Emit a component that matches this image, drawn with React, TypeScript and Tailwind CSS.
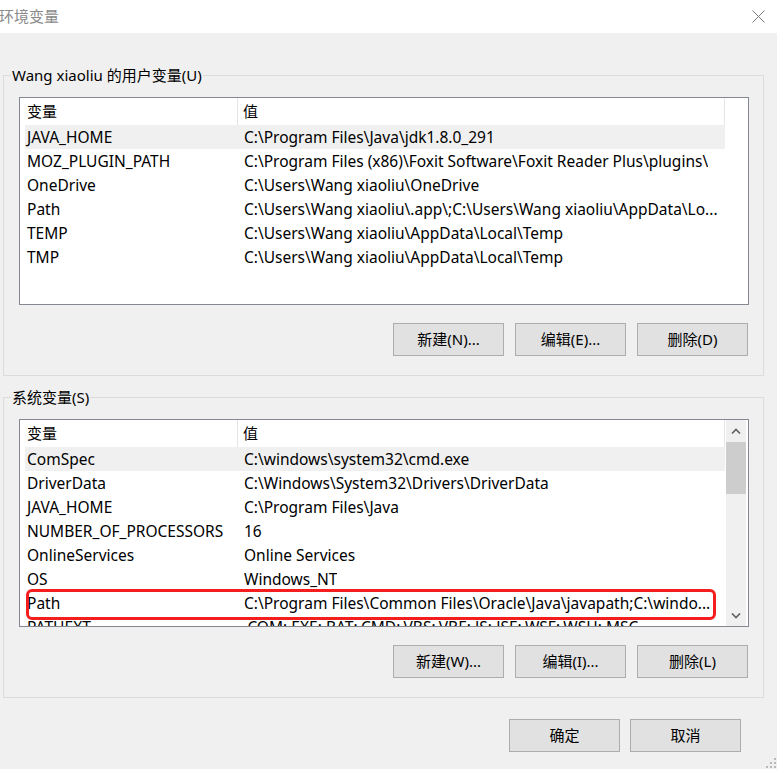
import React from "react";

type Row = { name: string; value: string };

const userVars: Row[] = [
  { name: "JAVA_HOME", value: "C:\\Program Files\\Java\\jdk1.8.0_291" },
  { name: "MOZ_PLUGIN_PATH", value: "C:\\Program Files (x86)\\Foxit Software\\Foxit Reader Plus\\plugins\\" },
  { name: "OneDrive", value: "C:\\Users\\Wang xiaoliu\\OneDrive" },
  { name: "Path", value: "C:\\Users\\Wang xiaoliu\\.app\\;C:\\Users\\Wang xiaoliu\\AppData\\Lo..." },
  { name: "TEMP", value: "C:\\Users\\Wang xiaoliu\\AppData\\Local\\Temp" },
  { name: "TMP", value: "C:\\Users\\Wang xiaoliu\\AppData\\Local\\Temp" },
];

const sysVars: Row[] = [
  { name: "ComSpec", value: "C:\\windows\\system32\\cmd.exe" },
  { name: "DriverData", value: "C:\\Windows\\System32\\Drivers\\DriverData" },
  { name: "JAVA_HOME", value: "C:\\Program Files\\Java" },
  { name: "NUMBER_OF_PROCESSORS", value: "16" },
  { name: "OnlineServices", value: "Online Services" },
  { name: "OS", value: "Windows_NT" },
  { name: "Path", value: "C:\\Program Files\\Common Files\\Oracle\\Java\\javapath;C:\\windo..." },
  { name: "PATHEXT", value: ".COM;.EXE;.BAT;.CMD;.VBS;.VBE;.JS;.JSE;.WSF;.WSH;.MSC" },
];

function Chevron({ up }: { up?: boolean }) {
  return (
    <svg width="10" height="6" viewBox="0 0 10 6" className="block">
      <path
        d={up ? "M1 5.5 L5 1.5 L9 5.5" : "M1 0.5 L5 4.5 L9 0.5"}
        fill="none"
        stroke="#606060"
        strokeWidth="1.6"
      />
    </svg>
  );
}

function VarList({ rows, scroll, marked }: { rows: Row[]; scroll?: boolean; marked?: string }) {
  return (
    <div className="mt-[12px] flex h-[208px] w-[730px] overflow-hidden border border-[#828790] bg-white pl-[5px] text-[15.5px]">
      <div className="w-[700px]">
        <div className="flex h-[27px] items-center text-[15px]">
          <div className="flex h-full w-[213px] items-center border-r border-[#e5e5e5] pl-[2px]">变量</div>
          <div className="flex h-full flex-1 items-center border-r border-[#e5e5e5] pl-[5px]">值</div>
        </div>
        {rows.map((r, i) => (
          <div
            key={r.name + i}
            className={`relative flex h-[24px] items-center whitespace-nowrap leading-[24px] ${i === 0 ? "bg-[#f0f0f0]" : ""}`}
          >
            <div className="w-[219px] shrink-0 pl-[2px]">{r.name}</div>
            <div className="overflow-hidden">{r.value}</div>
            {marked === r.name && i > 0 && (
              <div className="pointer-events-none absolute -top-[2px] left-[1px] h-[31px] w-[690px] rounded-[6px] border-[3px] border-[#f51e1e]" />
            )}
          </div>
        ))}
      </div>
      {scroll && (
        <div className="ml-[1px] flex w-[20px] flex-col bg-[#f0f0f0]">
          <div className="flex h-[21px] items-center justify-center">
            <Chevron up />
          </div>
          <div className="mt-[1px] h-[52px] bg-[#cdcdcd]" />
          <div className="flex-1" />
          <div className="flex h-[21px] items-center justify-center">
            <Chevron />
          </div>
        </div>
      )}
    </div>
  );
}

function Btn({ label }: { label: string }) {
  return (
    <button className="flex h-[33px] w-[111px] items-center justify-center border border-[#adadad] bg-[#e1e1e1] text-[15px] text-black">
      {label}
    </button>
  );
}

function Group({ title, children, first }: { title: string; children: React.ReactNode; first?: boolean }) {
  return (
    <div
      className={`${first ? "mt-[42px]" : "mt-[21px]"} ml-[3px] w-[761px] border border-[#dcdcdc] pb-[19px] pl-[15px] pr-[14px]`}
    >
      <div className="-ml-[8px] -mt-[11px] w-fit bg-[#f0f0f0] px-[1px] leading-[20px]">{title}</div>
      {children}
    </div>
  );
}

export default function App() {
  return (
    <div className="relative h-[769px] w-[777px] overflow-hidden bg-[#f0f0f0] font-['Noto_Sans','Noto_Sans_CJK_SC',sans-serif] text-[15px] text-black">
      <div className="flex h-[33px] items-center justify-between bg-white">
        <span className="-ml-[1px] text-[15px] text-[#8a8a8a]">环境变量</span>
        <svg width="13" height="13" viewBox="0 0 13 13" className="mr-[12px]">
          <path d="M0.5 0.5 L12.5 12.5 M12.5 0.5 L0.5 12.5" stroke="#7a7a7a" strokeWidth="1" />
        </svg>
      </div>

      <Group title="Wang xiaoliu 的用户变量(U)" first>
        <VarList rows={userVars} />
        <div className="mt-[18px] flex justify-end gap-[11px] pr-[1px]">
          <Btn label="新建(N)..." />
          <Btn label="编辑(E)..." />
          <Btn label="删除(D)" />
        </div>
      </Group>

      <Group title="系统变量(S)">
        <VarList rows={sysVars} scroll marked="Path" />
        <div className="mt-[18px] flex justify-end gap-[11px] pr-[1px]">
          <Btn label="新建(W)..." />
          <Btn label="编辑(I)..." />
          <Btn label="删除(L)" />
        </div>
      </Group>

      <div className="mt-[21px] flex justify-end gap-[10px] pr-[36px]">
        <Btn label="确定" />
        <Btn label="取消" />
      </div>

      <svg width="12" height="12" viewBox="0 0 12 12" className="absolute bottom-0 right-0">
        <rect x="9" y="1" width="2" height="2" fill="#b8b8b8" />
        <rect x="5" y="5" width="2" height="2" fill="#b8b8b8" />
        <rect x="9" y="5" width="2" height="2" fill="#b8b8b8" />
        <rect x="1" y="9" width="2" height="2" fill="#b8b8b8" />
        <rect x="5" y="9" width="2" height="2" fill="#b8b8b8" />
        <rect x="9" y="9" width="2" height="2" fill="#b8b8b8" />
      </svg>
    </div>
  );
}
